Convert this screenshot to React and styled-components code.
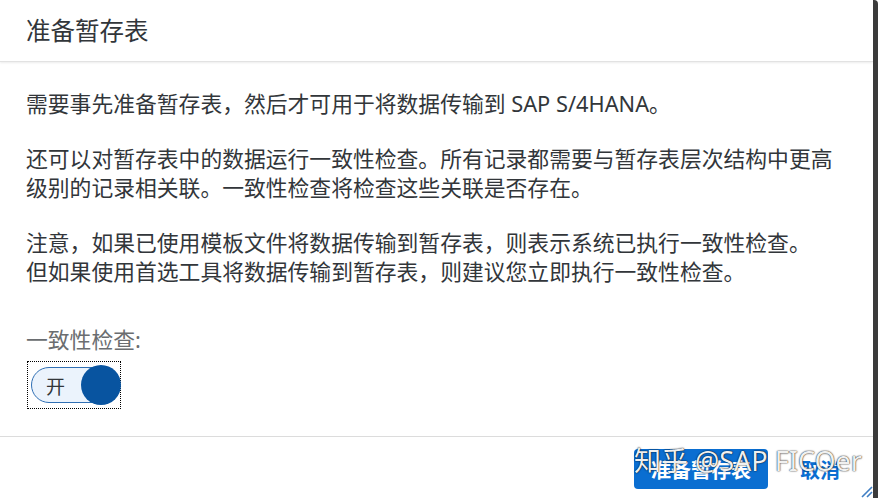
import styled, { createGlobalStyle } from "styled-components";
import { useState } from "react";

const GlobalStyle = createGlobalStyle`
  html, body {
    margin: 0;
    padding: 0;
    background: #ffffff;
  }
  body {
    font-family: "Noto Sans", "Noto Sans CJK SC", sans-serif;
    color: #32363a;
  }
`;

export default function App() {
  const [checkOn, setCheckOn] = useState(true);

  return (
    <>
      <GlobalStyle />
      <Dialog>
        <Header>
          <Title>准备暂存表</Title>
        </Header>
        <Content>
          <Paragraph>需要事先准备暂存表，然后才可用于将数据传输到 SAP S/4HANA。</Paragraph>
          <Paragraph>
            还可以对暂存表中的数据运行一致性检查。所有记录都需要与暂存表层次结构中更高级别的记录相关联。一致性检查将检查这些关联是否存在。
          </Paragraph>
          <Paragraph>
            注意，如果已使用模板文件将数据传输到暂存表，则表示系统已执行一致性检查。
            <br />
            但如果使用首选工具将数据传输到暂存表，则建议您立即执行一致性检查。
          </Paragraph>
          <FieldLabel>一致性检查:</FieldLabel>
          <SwitchFocus
            role="switch"
            aria-checked={checkOn}
            onClick={() => setCheckOn(!checkOn)}
          >
            <Track on={checkOn}>
              <TrackText>{checkOn ? "开" : "关"}</TrackText>
              <Handle />
            </Track>
          </SwitchFocus>
        </Content>
        <Footer>
          <PrimaryButton>准备暂存表</PrimaryButton>
          <GhostButton>取消</GhostButton>
        </Footer>
        <Watermark>知乎 @SAP FICOer</Watermark>
        <ResizeGrip width="14" height="14" viewBox="0 0 14 14">
          <path d="M13 3 L3 13 M13 8 L8 13" stroke="#3f7fc4" strokeWidth="1.6" />
        </ResizeGrip>
      </Dialog>
    </>
  );
}

const Dialog = styled.div`
  position: relative;
  width: 873px;
  height: 498px;
  background: #ffffff;
  border-right: 5px solid #3b3b3b;
  border-top-right-radius: 4px;
  display: flex;
  flex-direction: column;
  overflow: hidden;
`;

const Header = styled.div`
  height: 61px;
  flex-shrink: 0;
  display: flex;
  align-items: center;
  padding-left: 26px;
  border-bottom: 1px solid #e2e2e2;
  box-shadow: 0 1px 2px rgba(0, 0, 0, 0.08);
`;

const Title = styled.h1`
  margin: 0;
  font-size: 24.5px;
  font-weight: 400;
  color: #32363a;
  line-height: 30px;
`;

const Content = styled.div`
  flex: 1;
  padding: 27px 30px 0 26px;
`;

const Paragraph = styled.p`
  margin: 0 0 26px;
  font-size: 21.8px;
  line-height: 29px;
  color: #32363a;
`;

const FieldLabel = styled.div`
  margin-top: 39px;
  font-size: 21.8px;
  line-height: 29px;
  color: #6a6d70;
`;

const SwitchFocus = styled.button`
  margin: 7px 0 0 1px;
  width: 94px;
  height: 48px;
  padding: 0 0 0 3px;
  border: 1px dotted #000000;
  background: transparent;
  display: flex;
  align-items: center;
  cursor: pointer;
  box-sizing: border-box;
`;

const Track = styled.span`
  width: 88px;
  height: 36px;
  box-sizing: border-box;
  border: 1.5px solid ${(props) => (props.on ? "#2f6fb4" : "#89919a")};
  border-radius: 18px;
  background: ${(props) => (props.on ? "#ebf3fc" : "#ffffff")};
  display: flex;
  align-items: center;
  justify-content: space-between;
  padding-left: 14px;
`;

const TrackText = styled.span`
  font-size: 19px;
  color: #32363a;
  font-family: "Noto Sans CJK SC", sans-serif;
`;

const Handle = styled.span`
  width: 40px;
  height: 40px;
  border-radius: 50%;
  background: #0854a0;
  margin-right: -3px;
`;

const Footer = styled.div`
  height: 62px;
  flex-shrink: 0;
  border-top: 1px solid #dcdcdc;
  display: flex;
  align-items: flex-start;
  justify-content: flex-end;
  gap: 20px;
  padding: 12px 21px 0 0;
  box-sizing: border-box;
`;

const PrimaryButton = styled.button`
  height: 40px;
  width: 134px;
  border: none;
  border-radius: 4px;
  background: #0a6ed1;
  color: #ffffff;
  font-family: "Noto Sans CJK SC", sans-serif;
  font-size: 20px;
  font-weight: 700;
  cursor: pointer;
`;

const GhostButton = styled.button`
  height: 40px;
  padding: 0 12px;
  border: none;
  background: transparent;
  color: #0a6ed1;
  font-family: "Noto Sans CJK SC", sans-serif;
  font-size: 20px;
  font-weight: 700;
  cursor: pointer;
`;

const Watermark = styled.div`
  position: absolute;
  left: 634px;
  top: 444px;
  font-family: "Noto Sans", "Noto Sans CJK SC", sans-serif;
  font-size: 27px;
  line-height: 34px;
  color: rgba(255, 255, 255, 0.95);
  text-shadow: 0 0 1px rgba(0, 0, 0, 0.9), 0 0 2px rgba(0, 0, 0, 0.6);
  pointer-events: none;
  white-space: nowrap;
`;

const ResizeGrip = styled.svg`
  position: absolute;
  right: 0;
  bottom: 0;
`;
